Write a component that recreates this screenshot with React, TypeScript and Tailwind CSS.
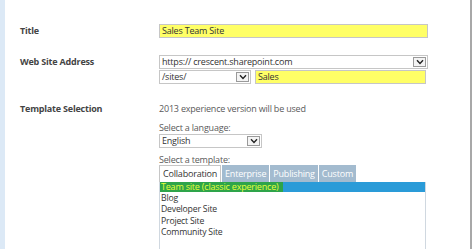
import React from "react";

// Small chevron used on the select boxes
function Chevron() {
  return (
    <svg width="8" height="6" viewBox="0 0 8 6">
      <path d="M1 1.2 L4 4.4 L7 1.2" fill="none" stroke="#222" strokeWidth="1.4" />
    </svg>
  );
}

function SelectBox({ value, className }: { value: string; className: string }) {
  return (
    <div className={`flex items-stretch border border-[#c6c6c6] bg-white ${className}`}>
      <div className="flex-1 pl-[2px] leading-[12px] text-[#333] truncate">{value}</div>
      <div className="w-[13px] flex items-center justify-center bg-[#f4f4f4] m-[1px] border border-[#9a9a9a]">
        <Chevron />
      </div>
    </div>
  );
}

const templates = ["Blog", "Developer Site", "Project Site", "Community Site"];
const tabs = ["Enterprise", "Publishing", "Custom"];

export default function App() {
  return (
    <div
      className="w-[474px] h-[249px] bg-white overflow-hidden flex text-[9px] tracking-[-0.2px]"
      style={{ fontFamily: '"Open Sans", "Noto Sans", sans-serif' }}
    >
      <div className="w-[5px] bg-[#dce9f6]" />
      <div className="flex-1 pl-[15px] pt-[24px]">
        {/* Title */}
        <div className="flex">
          <div className="w-[139px] pt-[1px] font-bold text-[#444] leading-[12px]">Title</div>
          <div className="w-[269px] h-[14px] border border-[#c6c6c6] bg-[#ffff66] pl-[2px] leading-[12px] text-[#333]">
            Sales Team Site
          </div>
        </div>

        {/* Web Site Address */}
        <div className="flex mt-[17px]">
          <div className="w-[139px] pt-[1px] font-bold text-[#444] leading-[12px]">Web Site Address</div>
          <div className="w-[269px] flex flex-col gap-[1px]">
            <SelectBox value="https:// crescent.sharepoint.com" className="h-[14px]" />
            <div className="flex gap-[4px]">
              <SelectBox value="/sites/" className="w-[92px] h-[14px]" />
              <div className="w-[171px] h-[14px] border border-[#c6c6c6] bg-[#ffff66] pl-[2px] leading-[12px] text-[#333]">
                Sales
              </div>
            </div>
          </div>
        </div>

        {/* Template Selection */}
        <div className="flex mt-[19px]">
          <div className="w-[139px] font-bold text-[#444] leading-[11px]">Template Selection</div>
          <div className="w-[269px] text-[#5a5a5a] leading-[11px]">
            <div>2013 experience version will be used</div>
            <div className="mt-[8px]">Select a language:</div>
            <SelectBox value="English" className="w-[103px] h-[14px] mt-[1px]" />
            <div className="mt-[6px]">Select a template:</div>
            <div className="flex h-[17px]">
              <div className="px-[3px] border border-b-0 border-[#c6c6c6] bg-white text-[#333] leading-[15px]">
                Collaboration
              </div>
              {tabs.map((t) => (
                <div
                  key={t}
                  className="px-[3px] ml-[1px] bg-[#a3bbcf] text-white leading-[17px]"
                >
                  {t}
                </div>
              ))}
            </div>
            <div className="w-[267px] h-[80px] border border-t-0 border-[#d0d8e0] text-[#333]">
              <div className="h-[10px] bg-[#2a9bd8] flex">
                <div className="w-[123px] bg-[#2ea44a] text-[#e6ff3a] leading-[10px] pl-[1px]">
                  Team site (classic experience)
                </div>
              </div>
              <div className="pl-[1px] pt-[1px] text-[8.7px]">
                {templates.map((t) => (
                  <div key={t} className="leading-[11.4px]">
                    {t}
                  </div>
                ))}
              </div>
            </div>
          </div>
        </div>
      </div>
      <div className="w-[2px] bg-[#a8a8a8] mr-[2px]" />
    </div>
  );
}
